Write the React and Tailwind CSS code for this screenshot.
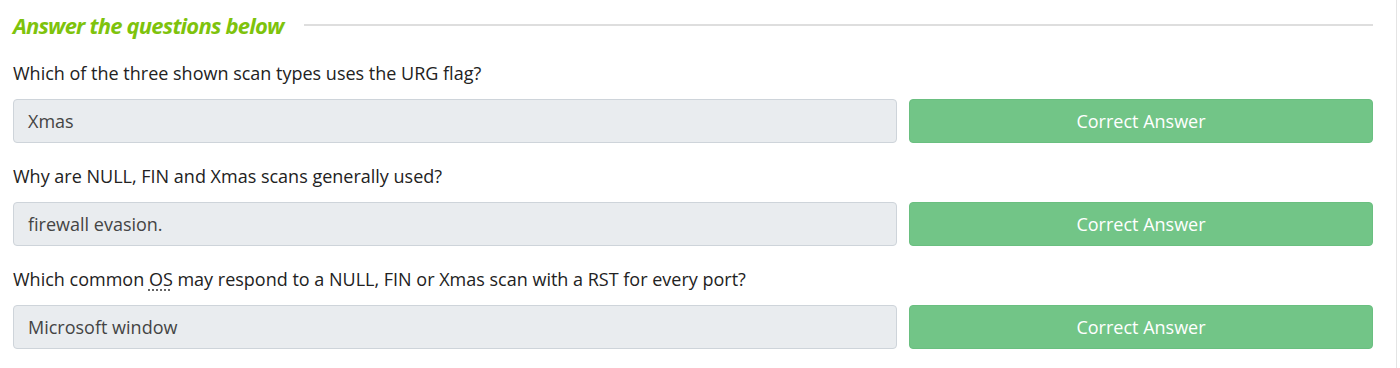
import React from 'react';

const questions = [
  {
    q: 'Which of the three shown scan types uses the URG flag?',
    a: 'Xmas',
  },
  {
    q: 'Why are NULL, FIN and Xmas scans generally used?',
    a: 'firewall evasion.',
  },
  {
    q: (
      <>
        Which common{' '}
        <abbr
          title="Operating System"
          className="underline decoration-dotted decoration-2 underline-offset-[3px] decoration-[#666]"
        >
          OS
        </abbr>{' '}
        may respond to a NULL, FIN or Xmas scan with a RST for every port?
      </>
    ),
    a: 'Microsoft window',
  },
];

function Question({ q, a }) {
  return (
    <div className="flex flex-col">
      <p className="text-[18px] leading-[26px] text-[#222] h-[26px]">{q}</p>
      <div className="mt-[13px] grid grid-cols-[884px_464px] gap-[12px]">
        <div className="h-[44px] bg-[#e9ecef] border border-[#ced4da] rounded-[4px] px-[14px] flex items-center text-[18px] text-[#444]">
          {a}
        </div>
        <button className="h-[44px] bg-[#72c587] border border-[#6abf80] rounded-[4px] text-white text-[18px] flex items-center justify-center">
          Correct Answer
        </button>
      </div>
    </div>
  );
}

export default function App() {
  return (
    <div
      className="w-[1400px] h-[368px] bg-white relative overflow-hidden"
      style={{ fontFamily: '"Open Sans", "Liberation Sans", sans-serif' }}
    >
      <div className="w-[1397px] h-full border-r border-[#e4e4e4] pl-[13px] pr-[23px]">
        {/* Heading */}
        <div className="flex items-center h-[48px] pt-[2px]">
          <h3 className="text-[22px] italic font-bold text-[#7ec30c] tracking-[-0.8px] whitespace-nowrap">
            Answer the questions below
          </h3>
          <div className="flex-1 ml-[20px] h-[2px] bg-[#dedede]" />
        </div>

        <div className="flex flex-col gap-[20px] pt-[12px]">
          {questions.map((item, i) => (
            <Question key={i} q={item.q} a={item.a} />
          ))}
        </div>
      </div>
    </div>
  );
}
